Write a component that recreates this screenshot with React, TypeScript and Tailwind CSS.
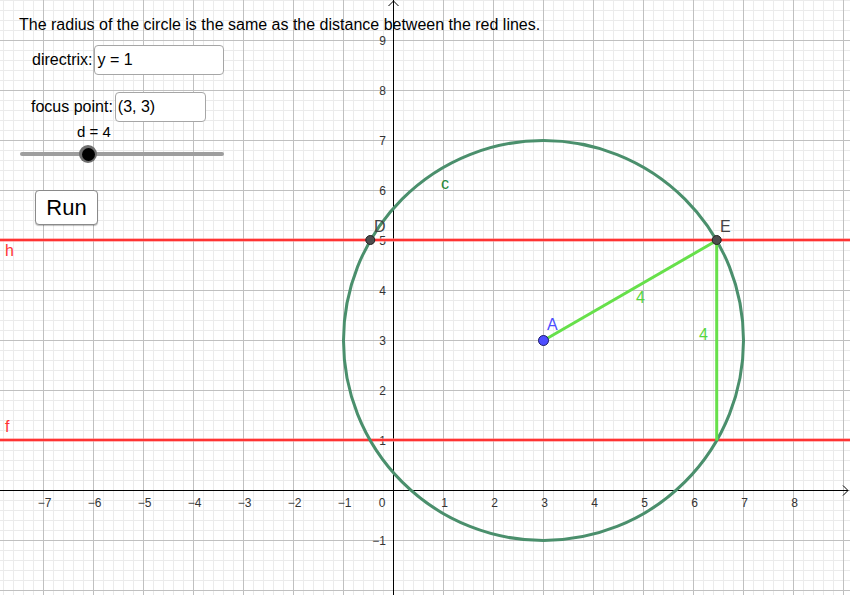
import React from 'react';

const W = 850;
const H = 595;
const OX = 393.5;
const OY = 490.5;
const U = 50;

const px = (x: number) => OX + x * U;
const py = (y: number) => OY - y * U;

const FONT = '"Liberation Sans", Arial, sans-serif';

function Graph() {
  const minorX: number[] = [];
  for (let x = OX % 10; x <= W; x += 10) minorX.push(x);
  const minorY: number[] = [];
  for (let y = OY % 10; y <= H; y += 10) minorY.push(y);

  const xTicks = [-7, -6, -5, -4, -3, -2, -1, 1, 2, 3, 4, 5, 6, 7, 8];
  const yTicks = [-1, 1, 2, 3, 4, 5, 6, 7, 8, 9];

  const ex = px(3 + Math.sqrt(12));
  const dx = px(3 - Math.sqrt(12));

  const red = '#ff3333';
  const circle = '#4a8f6c';
  const lime = '#66e04a';

  return (
    <svg
      className="absolute inset-0"
      width={W}
      height={H}
      viewBox={`0 0 ${W} ${H}`}
      style={{ fontFamily: FONT }}
    >
      {/* grid */}
      {minorX.map((x) => (
        <line key={'vx' + x} x1={x} y1={0} x2={x} y2={H} stroke="#ebebeb" strokeWidth={1} />
      ))}
      {minorY.map((y) => (
        <line key={'hy' + y} x1={0} y1={y} x2={W} y2={y} stroke="#ebebeb" strokeWidth={1} />
      ))}
      {minorX
        .filter((x) => Math.abs(((x - OX) / U) % 1) < 0.01)
        .map((x) => (
          <line key={'VX' + x} x1={x} y1={0} x2={x} y2={H} stroke="#c0c0c0" strokeWidth={1} />
        ))}
      {minorY
        .filter((y) => Math.abs(((y - OY) / U) % 1) < 0.01)
        .map((y) => (
          <line key={'HY' + y} x1={0} y1={y} x2={W} y2={y} stroke="#c0c0c0" strokeWidth={1} />
        ))}

      {/* axes */}
      <line x1={OX} y1={0} x2={OX} y2={H} stroke="#000" strokeWidth={1} />
      <line x1={0} y1={OY} x2={W - 2} y2={OY} stroke="#000" strokeWidth={1} />
      <polyline points={`${OX - 5},6 ${OX},1 ${OX + 5},6`} fill="none" stroke="#000" strokeWidth={1} />
      <polyline points={`${W - 7},${OY - 5} ${W - 2},${OY} ${W - 7},${OY + 5}`} fill="none" stroke="#000" strokeWidth={1} />

      {/* tick labels */}
      {xTicks.map((k) => (
        <text
          key={'tx' + k}
          x={px(k) + 1}
          y={507}
          fontSize={12}
          fill="#333"
          textAnchor="middle"
        >
          {k < 0 ? '\u2212' + -k : k}
        </text>
      ))}
      <text x={382} y={507} fontSize={12} fill="#333" textAnchor="middle">
        0
      </text>
      {yTicks.map((k) => (
        <text key={'ty' + k} x={386} y={py(k) + 4.5} fontSize={12} fill="#333" textAnchor="end">
          {k < 0 ? '\u2212' + -k : k}
        </text>
      ))}

      {/* red lines */}
      {[5, 1].map((k) => (
        <g key={'r' + k}>
          <line x1={0} y1={py(k) - 0.5} x2={W} y2={py(k) - 0.5} stroke="#ff8c8c" strokeOpacity={0.6} strokeWidth={4} />
          <line x1={0} y1={py(k) - 0.5} x2={W} y2={py(k) - 0.5} stroke={red} strokeWidth={2} />
        </g>
      ))}

      {/* circle */}
      <circle cx={px(3)} cy={py(3)} r={4 * U} fill="none" stroke={circle} strokeWidth={3} />

      {/* segments */}
      <line x1={px(3)} y1={py(3)} x2={ex} y2={py(5)} stroke={lime} strokeWidth={3} />
      <line x1={ex} y1={py(5)} x2={ex} y2={py(1)} stroke={lime} strokeWidth={3} />

      {/* points */}
      <circle cx={dx} cy={py(5) - 0.5} r={4.5} fill="#4d4d4d" stroke="#222" strokeWidth={1} />
      <circle cx={ex} cy={py(5) - 0.5} r={4.5} fill="#4d4d4d" stroke="#222" strokeWidth={1} />
      <circle cx={px(3)} cy={py(3)} r={5} fill="#4d4dff" stroke="#1a1a66" strokeWidth={1} />

      {/* labels */}
      <text x={5} y={256} fontSize={16} fill={red}>h</text>
      <text x={5} y={432} fontSize={16} fill={red}>f</text>
      <text x={441} y={189} fontSize={16} fill="#248a3c">c</text>
      <text x={374} y={232} fontSize={16} fill="#444">D</text>
      <text x={720} y={232} fontSize={16} fill="#444">E</text>
      <text x={547} y={330} fontSize={16} fill="#4d4dff">A</text>
      <text x={636} y={303} fontSize={16} fill="#55d63d">4</text>
      <text x={699} y={340} fontSize={16} fill="#55d63d">4</text>
    </svg>
  );
}

function Field({ label, value, width }: { label: string; value: string; width: number }) {
  return (
    <div className="flex items-center gap-[2px]">
      <span className="text-[16px] leading-[20px] text-black">{label}</span>
      <div
        className="flex h-[30px] items-center rounded-[4px] border border-[#a6a6a6] bg-white pl-[2px] text-[16px] text-black"
        style={{ width }}
      >
        {value}
      </div>
    </div>
  );
}

export default function App() {
  return (
    <div
      className="relative h-[595px] w-[850px] overflow-hidden bg-white"
      style={{ fontFamily: FONT }}
    >
      <Graph />
      <div className="absolute left-0 top-0 flex flex-col items-start">
        <p className="ml-[19px] mt-[15px] text-[16px] leading-[20px] text-black">
          The radius of the circle is the same as the distance between the red lines.
        </p>
        <div className="ml-[32px] mt-[10px]">
          <Field label="directrix:" value="y = 1" width={130} />
        </div>
        <div className="ml-[31px] mt-[17px]">
          <Field label="focus point:" value="(3, 3)" width={91} />
        </div>
        <span className="ml-[77px] text-[15px] leading-[20px] text-black">d = 4</span>
        <div className="relative ml-[20px] mt-[3px] flex h-[18px] w-[204px] items-center">
          <div className="h-[4px] w-full rounded-full bg-[#9e9e9e]" />
          <div className="absolute left-[59px] top-0 flex h-[18px] w-[18px] items-center justify-center rounded-full bg-[#6e6e6e]">
            <div className="h-[13px] w-[13px] rounded-full bg-black" />
          </div>
        </div>
        <button className="ml-[35px] mt-[27px] flex h-[35px] w-[63px] items-center justify-center rounded-[4px] border border-[#8a8a8a] bg-white text-[22px] text-black shadow-[0_1px_1px_rgba(0,0,0,0.25)]">
          Run
        </button>
      </div>
    </div>
  );
}
